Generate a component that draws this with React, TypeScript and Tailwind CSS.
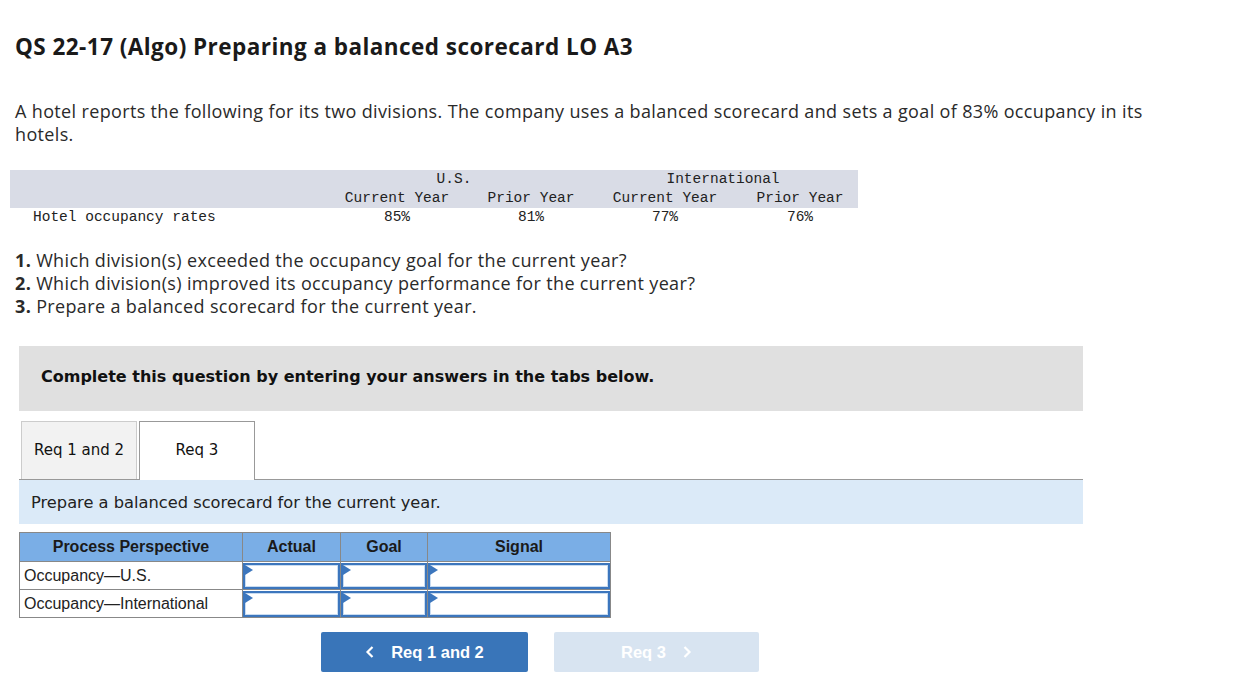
import * as React from 'react';

const sans = { fontFamily: '"Liberation Sans", Arial, sans-serif' };

function InputCell() {
  return (
    <td className="border border-[#888] p-0">
      <div className="relative h-[26px] border-2 border-[#3c76bd] bg-white shadow-[inset_0_0_0_1px_#c9dcf1]">
        <span className="absolute left-0 top-0 h-0 w-0 border-y-[5px] border-l-[8px] border-y-transparent border-l-[#3c76bd]" />
      </div>
    </td>
  );
}

export default function App() {
  return (
    <div className="min-h-[687px] bg-white text-[#222] font-['Open_Sans',Arial,sans-serif]">
      <div className="px-[15px] pt-[33px]">
        <h1 className="text-[22.5px] font-bold leading-[28px] tracking-[0.45px] text-[#1a1a1a]">
          QS 22-17 (Algo) Preparing a balanced scorecard LO A3
        </h1>

        <p className="mt-[39px] pr-[60px] text-[18px] leading-[23px] tracking-[0.35px] text-[#2a2a2a]">
          A hotel reports the following for its two divisions. The company uses a balanced scorecard and sets a goal of 83% occupancy in its hotels.
        </p>
      </div>

      {/* data table */}
      <div className="ml-[10px] mt-[24px] w-[848px] font-['Liberation_Mono','DejaVu_Sans_Mono',monospace] text-[14.5px] leading-[19px] text-[#222]">
        <div className="bg-[#d9dce6]">
          <div className="grid grid-cols-[320px_268px_260px]">
            <div />
            <div className="pr-[20px] text-center">U.S.</div>
            <div className="pr-[10px] text-center">International</div>
          </div>
          <div className="grid grid-cols-[320px_134px_134px_134px_126px]">
            <div />
            <div className="text-center">Current Year</div>
            <div className="text-center">Prior Year</div>
            <div className="text-center">Current Year</div>
            <div className="pl-[10px] text-center">Prior Year</div>
          </div>
        </div>
        <div className="grid grid-cols-[320px_134px_134px_134px_126px]">
          <div className="pl-[23px]">Hotel occupancy rates</div>
          <div className="text-center">85%</div>
          <div className="text-center">81%</div>
          <div className="text-center">77%</div>
          <div className="pl-[10px] text-center">76%</div>
        </div>
      </div>

      <div className="mt-[22px] px-[15px] text-[18px] leading-[23px] tracking-[0.35px] text-[#2a2a2a]">
        <p><span className="font-bold">1.</span> Which division(s) exceeded the occupancy goal for the current year?</p>
        <p><span className="font-bold">2.</span> Which division(s) improved its occupancy performance for the current year?</p>
        <p><span className="font-bold">3.</span> Prepare a balanced scorecard for the current year.</p>
      </div>

      <div className="ml-[19px] w-[1064px]">
        <div className="mt-[28px] flex h-[65px] items-center bg-[#e0e0e0] pl-[22px] pb-[3px] font-['DejaVu_Sans',Verdana,sans-serif] text-[16px] font-bold text-[#111]">
          Complete this question by entering your answers in the tabs below.
        </div>

        {/* tabs */}
        <div className="mt-[10px] flex items-end border-b border-[#999] font-['DejaVu_Sans',Verdana,sans-serif] text-[15px] text-[#111]">
          <div className="ml-[2px] flex h-[58px] w-[116px] items-center justify-center border border-b-0 border-[#ccc] bg-[#f2f2f2]">
            Req 1 and 2
          </div>
          <div className="relative -mb-px ml-[2px] flex h-[59px] w-[116px] items-center justify-center border border-b-0 border-[#999] bg-white pb-px">
            Req 3
          </div>
        </div>

        <div className="flex h-[44px] items-center bg-[#dbeaf8] pl-[12px] pt-[3px] font-['DejaVu_Sans',Verdana,sans-serif] text-[16.25px] text-[#222]">
          Prepare a balanced scorecard for the current year.
        </div>

        {/* scorecard */}
        <table className="mt-[8px] border-collapse text-[16px]" style={sans}>
          <colgroup>
            <col className="w-[223px]" />
            <col className="w-[98px]" />
            <col className="w-[87px]" />
            <col className="w-[183px]" />
          </colgroup>
          <thead>
            <tr className="h-[29px] bg-[#7aaee6] text-[#1a1a1a]">
              <th className="border border-[#888] font-bold">Process Perspective</th>
              <th className="border border-[#888] font-bold">Actual</th>
              <th className="border border-[#888] font-bold">Goal</th>
              <th className="border border-[#888] font-bold">Signal</th>
            </tr>
          </thead>
          <tbody>
            {['Occupancy—U.S.', 'Occupancy—International'].map((label) => (
              <tr key={label} className="h-[28px]">
                <td className="border border-[#888] pl-[4px] text-left text-[#222]">{label}</td>
                <InputCell />
                <InputCell />
                <InputCell />
              </tr>
            ))}
          </tbody>
        </table>

        {/* nav buttons */}
        <div className="mt-[14px] flex gap-[26px] pl-[302px]">
          <button className="flex h-[40px] w-[207px] items-center justify-center gap-[16px] rounded-[2px] bg-[#3975b9] text-[16.5px] font-bold text-white" style={sans}>
            <svg width="10" height="14" viewBox="0 0 10 14" fill="none">
              <path d="M7.5 2 L2.5 7 L7.5 12" stroke="white" strokeWidth="2.2" />
            </svg>
            Req 1 and 2
          </button>
          <button className="flex h-[40px] w-[205px] items-center justify-center gap-[16px] rounded-[2px] bg-[#d8e4f1] text-[16.5px] font-bold text-white" style={sans}>
            Req 3
            <svg width="10" height="14" viewBox="0 0 10 14" fill="none">
              <path d="M2.5 2 L7.5 7 L2.5 12" stroke="white" strokeWidth="2.2" />
            </svg>
          </button>
        </div>
      </div>
    </div>
  );
}
